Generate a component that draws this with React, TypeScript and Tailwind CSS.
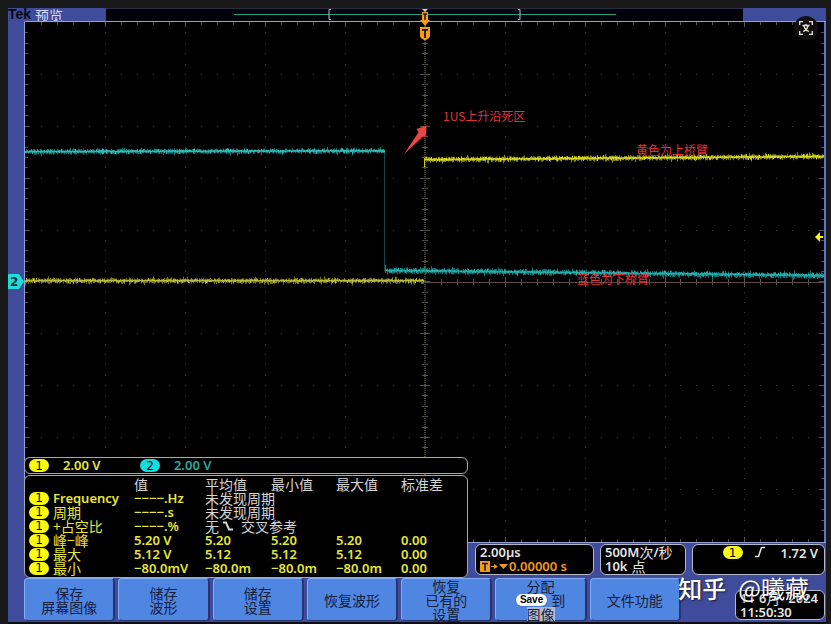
import type { ReactNode } from 'react';

const WIDTH = 802;
const HEIGHT = 522;
const DIV_X = 79.9;
const DIV_Y = 51.85;

const measurements = [
  { name: 'Frequency', value: '−−−−.Hz', note: '未发现周期' },
  { name: '周期', value: '−−−−.s', note: '未发现周期' },
  { name: '+占空比', value: '−−−−.%', note: '交叉参考', edge: true },
  { name: '峰−峰', value: '5.20 V', stats: ['5.20', '5.20', '5.20', '0.00'] },
  { name: '最大', value: '5.12 V', stats: ['5.12', '5.12', '5.12', '0.00'] },
  { name: '最小', value: '−80.0mV', stats: ['−80.0m', '−80.0m', '−80.0m', '0.00'] },
];

const menu: ReactNode[][] = [
  ['保存', '屏幕图像'],
  ['储存', '波形'],
  ['储存', '设置'],
  ['恢复波形'],
  ['恢复', '已有的', '设置'],
  [
    '分配',
    <>
      <span className="rounded-full bg-white px-1 font-['Liberation_Sans',sans-serif] text-[10px] leading-3 font-bold text-black shadow">Save</span>
      到
    </>,
    <span className="bg-[#b4bccc]">图像</span>,
  ],
  ['文件功能'],
];

// small seeded generator, so the noise is the same on every render
const random = (seed: number) => () => {
  seed = (seed * 16807) % 2147483647;
  return seed / 2147483647;
};

const trace = (from: number, to: number, y1: number, y2: number, seed: number, spread: number) => {
  const next = random(seed);
  let d = '';
  for (let x = from; x < to; x++) {
    const y = y1 + ((y2 - y1) * (x - from)) / (to - from);
    const up = next() * spread + (next() > 0.93 ? 1.5 : 0);
    const down = next() * spread + (next() > 0.93 ? 1.5 : 0);
    d += `M${x + 0.5} ${(y - up).toFixed(1)}V${(y + down + 0.8).toFixed(1)}`;
  }
  return d;
};

const dots = () => {
  let d = '';
  for (let i = 1; i < 10; i++) {
    for (let j = 1; j < 50; j++) {
      d += `M${Math.floor(1.8 + i * DIV_X)} ${Math.floor(1.6 + (j * DIV_Y) / 5) + 0.5}h1`;
    }
  }
  for (let j = 1; j < 10; j++) {
    for (let i = 1; i < 50; i++) {
      d += `M${Math.floor(1.8 + (i * DIV_X) / 5)} ${Math.floor(1.6 + j * DIV_Y) + 0.5}h1`;
    }
  }
  return d;
};

const ticks = () => {
  let d = '';
  for (let i = 1; i < 50; i++) {
    const x = Math.floor(1.8 + (i * DIV_X) / 5) + 0.5;
    const len = i % 5 === 0 ? 5 : 3;
    d += `M${x} 1v${len}M${x} ${HEIGHT - 1}v-${len}`;
    if (i > 25) d += `M${x} ${261 - len}v${len * 2}`;
    const y = Math.floor(1.6 + (i * DIV_Y) / 5) + 0.5;
    d += `M1 ${y}h${len}M${WIDTH - 2} ${y}h-${len}M${401 - len} ${y}h${len * 2}`;
  }
  return d;
};

const Cjk = ({ children }: { children: ReactNode }) => (
  <span className="font-['Noto_Sans_CJK_SC',sans-serif] text-sm leading-[14px] font-normal">{children}</span>
);

const Badge = ({ children, cyan = false }: { children: ReactNode; cyan?: boolean }) => (
  <span
    className={`inline-flex h-[13px] w-5 shrink-0 items-center justify-center rounded-full font-['DejaVu_Sans','Noto_Sans',sans-serif] text-xs leading-3 font-normal text-black ${
      cyan ? 'bg-[#12dede]' : 'bg-[#fafa14]'
    }`}
  >
    {children}
  </span>
);

const Overview = () => (
  <svg viewBox="0 0 637 13" preserveAspectRatio="none" className="h-[13px] min-w-0 flex-1 bg-[#02030a]" aria-hidden="true">
    <path d="M128 6.5H510" stroke="#2f9c84" />
    <path d="M225 1.5h-2v10h2M412 1.5h2v10h-2" fill="none" stroke="#b9bccb" />
    <path d="M0 .5H637" stroke="#2a2a44" />
  </svg>
);

const TriggerMarks = () => (
  <svg width="14" height="34" viewBox="0 0 14 34" className="absolute -top-3 left-1/2 -translate-x-1/2" aria-hidden="true">
    <path d="M4 0h6L7 3z" fill="#d8cdb8" />
    <path d="M4 3h6v8h2l-5 6-5-6h2z" fill="#f59c1a" />
    <path d="M5 5h4M7 5v6" stroke="#1c1204" strokeWidth="1.5" />
    <path d="M2 18h10v9q0 2-5 4.500q-5-2.500-5-4.500z" fill="#f59c1a" />
    <path d="M4 20.800h6M7 21v8" stroke="#1c1204" strokeWidth="1.8" />
  </svg>
);

const Screen = () => (
  <div className="relative h-[522px] bg-black">
    <svg viewBox={`0 0 ${WIDTH} ${HEIGHT}`} preserveAspectRatio="none" className="block size-full" role="img" aria-label="波形">
      <path d={dots()} stroke="#3c3c36" />
      <path d={ticks()} stroke="#55554c" />
      <path d="M401 1V521" stroke="#4a4a26" strokeWidth="2" strokeDasharray="1 1" />
      <path d="M401 261.500H800" stroke="#5e4a48" />
      <path d="M360.500 130V250" stroke="#124646" />
      <path d={trace(1, 361, 130.5, 129.5, 11, 2.6)} stroke="#0f7878" />
      <path d={trace(1, 361, 130.2, 129.4, 17, 1)} stroke="#36b8b4" />
      <path d={trace(361, 800, 249, 254.5, 23, 3)} stroke="#0f7878" />
      <path d={trace(361, 800, 249, 254, 29, 1.1)} stroke="#2aaeac" />
      <path d="M361.500 244v8" stroke="#1a8a8a" />
      <path d={trace(1, 400, 259.5, 259.5, 37, 2.7)} stroke="#74741a" />
      <path d={trace(1, 400, 259.2, 259.2, 41, 1)} stroke="#bcbc3c" />
      <path d={trace(400, 800, 138.5, 135, 43, 2.7)} stroke="#86860e" />
      <path d={trace(400, 800, 138.2, 135, 47, 1.1)} stroke="#d6d628" />
      <path d="M400.500 137v9" stroke="#c8c820" />
      <path d="M402.700 104.500 392.500 108 394.500 111.300 380 133.300 399.500 115 401.500 116.200z" fill="#f04444" />
      <path d="M791 216l5-5v4h3v2h-3v4z" fill="#f6f61c" />
      <path d={`M.5 ${HEIGHT}V.5H${WIDTH}`} fill="none" stroke="#8fa3d6" />
      <path d={`M${WIDTH - 1} 1V${HEIGHT}`} stroke="#5d76cc" strokeWidth="2" />
      <path d={`M0 ${HEIGHT - 0.5}H${WIDTH}`} stroke="#8fa3d6" />
    </svg>
    <TriggerMarks />
    <div className="font-['Noto_Sans_CJK_SC',sans-serif] text-xs leading-4 font-normal whitespace-nowrap text-[#e0323a]">
      <p className="absolute top-[87px] left-[419px]">1US上升沿死区</p>
      <p className="absolute top-[121px] left-[612px]">黄色为上桥臂</p>
      <p className="absolute top-[250px] left-[553px]">蓝色为下桥臂</p>
    </div>
    <svg width="16" height="17" viewBox="0 0 16 17" className="absolute top-[252px] -left-4" role="img" aria-label="2">
      <path d="M0 1h11l5 7.500-5 7.500H0z" fill="#22dcdc" />
      <text x="2" y="13" fontSize="12" fontWeight="700" fontFamily="DejaVu Sans, sans-serif" fill="#06343c">2</text>
    </svg>
  </div>
);

const Results = () => (
  <div className="flex w-[444px] shrink-0 flex-col gap-px">
    <div className="flex h-[17px] items-center rounded-md border border-[#a8a8a8] bg-black pl-1 text-[#e6e63c]">
      <Badge>1</Badge>
      <span className="ml-[14px] w-[77px]">2.00 V</span>
      <Badge cyan>2</Badge>
      <span className="ml-[14px] text-[#2aa8a0]">2.00 V</span>
    </div>
    <div className="h-[103px] rounded-md border border-[#a8a8a8] bg-black pt-px">
      <table className="w-full table-fixed border-collapse text-left leading-[14px] whitespace-nowrap text-[#e6e63c]">
        <colgroup>
          <col className="w-[109px]" />
          <col className="w-[71px]" />
          <col className="w-[66px]" />
          <col className="w-[65px]" />
          <col className="w-[65px]" />
          <col />
        </colgroup>
        <thead className="text-sm leading-[14px] text-[#d6d6d6]">
          <tr className="h-[14px]">
            <td className="p-0" />
            {['值', '平均值', '最小值', '最大值', '标准差'].map((title) => (
              <th key={title} className="p-0 font-['Noto_Sans_CJK_SC',sans-serif] font-normal">{title}</th>
            ))}
          </tr>
        </thead>
        <tbody>
          {measurements.map((row) => (
            <tr key={row.name} className="h-[14px]">
              <th className="p-0 pl-1 font-semibold">
                <span className="flex h-[14px] items-center gap-1">
                  <Badge>1</Badge>
                  {row.name === 'Frequency' ? row.name : <Cjk>{row.name}</Cjk>}
                </span>
              </th>
              <td className="p-0">{row.value}</td>
              {row.stats?.map((stat, i) => <td key={i} className="p-0">{stat}</td>)}
              {row.note && (
                <td colSpan={4} className="p-0 text-[#d6d6d6]">
                  <span className="flex h-[14px] items-center">
                    {row.edge && (
                      <span className="mr-2 flex items-center gap-1">
                        <Cjk>无</Cjk>
                        <svg width="10" height="10" viewBox="0 0 10 10" aria-hidden="true">
                          <path d="M0 1.500h3l3 7h4" fill="none" stroke="currentColor" strokeWidth="2" />
                        </svg>
                      </span>
                    )}
                    <Cjk>{row.note}</Cjk>
                  </span>
                </td>
              )}
            </tr>
          ))}
        </tbody>
      </table>
    </div>
  </div>
);

const Readouts = () => (
  <div className="mb-[3px] flex h-[31px] min-w-0 flex-1 gap-[6px] pr-px pl-[7px] leading-[14px] whitespace-nowrap text-[#e4e4e4]">
    <div className="w-[119px] rounded-md border border-[#b4b8cc] bg-black pl-1">
      <p>2.00µs</p>
      <p className="flex items-center text-[#f09a20]">
        <svg width="29" height="11" viewBox="0 0 29 11" aria-hidden="true">
          <path d="M0 0h10v11H0z" fill="#f09a20" />
          <path d="M2 2.500h6M5 2.500v7" stroke="#1c1204" strokeWidth="1.5" />
          <path d="M11 5.500h5" stroke="#f09a20" />
          <path d="M14 3l4 2.500-4 2.500zM19 3h9l-4.500 5z" fill="#f09a20" />
        </svg>
        0.00000 s
      </p>
    </div>
    <div className="w-[86px] rounded-md border border-[#b4b8cc] bg-black pl-1">
      <p className="flex">500M<Cjk>次</Cjk>/<Cjk>秒</Cjk></p>
      <p className="flex gap-1">10k <Cjk>点</Cjk></p>
    </div>
    <div className="flex min-w-0 flex-1 items-start justify-end rounded-md border border-[#b4b8cc] bg-black pt-px pr-[6px]">
      <Badge>1</Badge>
      <svg width="10" height="12" viewBox="0 0 10 12" className="mr-4 ml-3" aria-hidden="true">
        <path d="M0 10.500h3.500l3-9H10" fill="none" stroke="currentColor" strokeWidth="1.5" />
      </svg>
      <span>1.72 V</span>
    </div>
  </div>
);

export default function App() {
  return (
    <div className="min-h-screen bg-[#191919] pt-2 pr-[5px] pl-2 font-['Noto_Sans','Noto_Sans_CJK_SC',sans-serif] text-[13px] font-semibold">
      <main className="relative bg-[#3f4b9b] pb-px">
        <header className="flex h-[13px]">
          <h1 className="flex w-[98px] items-center gap-1 text-sm leading-[13px] font-normal text-[#d8dcf4]">
            <span className="font-['Liberation_Sans',sans-serif] font-bold text-[#06070f]">Tek</span>
            <Cjk>预览</Cjk>
          </h1>
          <Overview />
          <div className="w-[83px]" />
        </header>

        <div className="pl-4">
          <Screen />
          <div className="relative -mt-[86px] flex items-end">
            <Results />
            <Readouts />
          </div>

          <div className="flex">
            <nav className="grid flex-1 grid-cols-7 gap-[3px]">
              {menu.map((lines, i) => (
                <button
                  key={i}
                  type="button"
                  className="flex h-[43px] flex-col items-center justify-center rounded border-t border-r-2 border-b border-l border-t-[#86aef4] border-r-[#28336f] border-b-[#28336f] border-l-[#86aef4] bg-[#4f86e2] font-['Noto_Sans_CJK_SC',sans-serif] text-sm leading-[14px] font-normal text-[#14203c]"
                >
                  {lines.map((line, j) => (
                    <span key={j} className="flex h-[14px] items-center gap-1">{line}</span>
                  ))}
                </button>
              ))}
            </nav>
            <div className="flex w-[145px] items-end justify-end pr-px pb-px">
              <p className="h-[30px] w-[90px] rounded-md border border-[#b4b8cc] bg-black pl-1 leading-[14px] whitespace-nowrap text-[#e4e4e4]">
                <span className="flex gap-1">11 <span className="flex">6<Cjk>月</Cjk></span> <span className="ml-1">2024</span></span>
                11:50:30
              </p>
            </div>
          </div>
        </div>

        <button
          type="button"
          aria-label="识别文字"
          className="absolute top-2 right-2 flex size-6 items-center justify-center rounded-full bg-[#101010] text-[#e8e4da]"
        >
          <svg width="14" height="14" viewBox="0 0 14 14" fill="none" stroke="currentColor" strokeWidth="1.3" aria-hidden="true">
            <path d="M.7 4V.7H4M10 .7h3.300V4M13.300 10v3.300H10M4 13.300H.7V10" />
            <path d="M3.500 4.500h7M7 3v1.500M5 5q1 4 5 5.500M9 5q-1 4-5 5.500" />
          </svg>
        </button>

        <p className="absolute right-[17px] bottom-5 flex gap-3 font-['Noto_Sans_CJK_SC',sans-serif] text-2xl leading-7 whitespace-nowrap text-white [text-shadow:1px_1px_2px_#000000b0]">
          <span className="font-medium">知乎</span>
          <span className="font-normal">@曦藏</span>
        </p>
      </main>
      <div className="h-[2px] bg-[#0c0c12]" />
    </div>
  );
}
